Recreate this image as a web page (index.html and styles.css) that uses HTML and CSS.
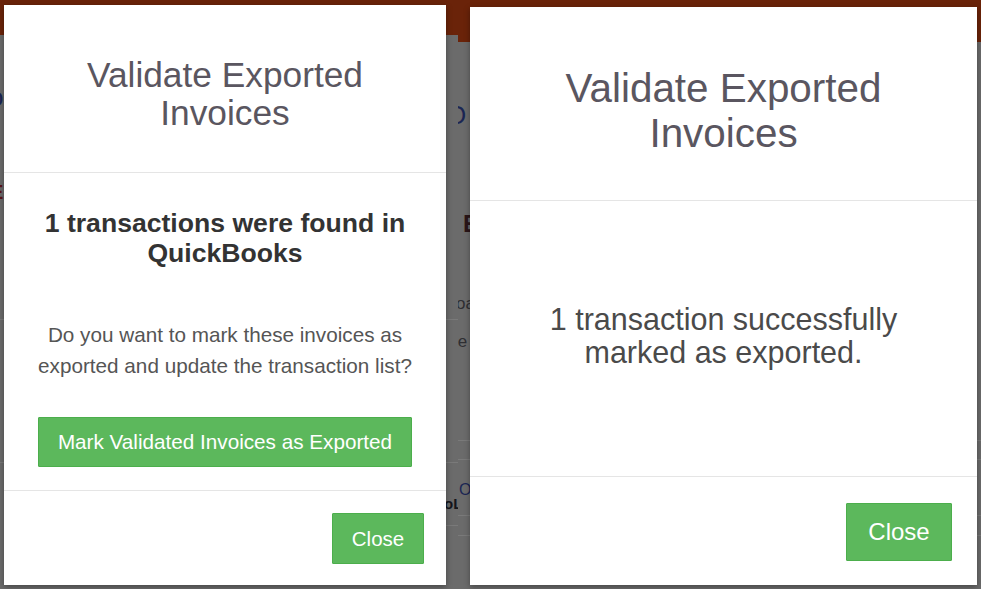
FILE: index.html
```html
<!DOCTYPE html>
<html lang="en">
<head>
    <meta charset="UTF-8">
    <title>Validate Exported Invoices</title>
    <link rel="stylesheet" href="styles.css">
</head>
<body>
<div class="shot shot-left">
    <div class="page page-left">
        <div class="bar"></div>
        <div class="frag edge-o">o</div>
        <div class="frag edge-e">E</div>
        <div class="rule rule-a"></div>
        <div class="rule rule-b"></div>
        <div class="frag gap-ol">oL</div>
        <div class="rule rule-c"></div>
    </div>
    <div class="modal modal-left">
        <div class="modal-header">
            <h4 class="modal-title">Validate Exported<br>Invoices</h4>
        </div>
        <div class="modal-body">
            <h4 class="found">1 transactions were found in<br>QuickBooks</h4>
            <p class="question">Do you want to mark these invoices as<br>exported and update the transaction list?</p>
            <button class="btn btn-success btn-mark">Mark Validated Invoices as Exported</button>
        </div>
        <div class="modal-footer">
            <button class="btn btn-success btn-close">Close</button>
        </div>
    </div>
</div>
<div class="shot shot-right">
    <div class="page page-right">
        <div class="bar"></div>
        <div class="frag gap-d">O</div>
        <div class="frag gap-e">E</div>
        <div class="frag gap-oa">oa</div>
        <div class="frag gap-re">re</div>
        <div class="rule rule-d"></div>
        <div class="rule rule-e"></div>
        <div class="frag gap-o">O</div>
        <div class="rule rule-f"></div>
        <div class="rule rule-g"></div>
        <div class="heads">
            <span>Date</span>
            <span>Sub Total</span>
            <span>Status</span>
        </div>
    </div>
    <div class="modal modal-right">
        <div class="modal-header">
            <h4 class="modal-title">Validate Exported<br>Invoices</h4>
        </div>
        <div class="modal-body">
            <p class="done">1 transaction successfully<br>marked as exported.</p>
        </div>
        <div class="modal-footer">
            <button class="btn btn-success btn-close">Close</button>
        </div>
    </div>
</div>
</body>
</html>
```

FILE: styles.css
```css
* {
    margin: 0;
    padding: 0;
    box-sizing: border-box;
}

body {
    width: 981px;
    height: 589px;
    overflow: hidden;
    display: flex;
    background-color: #6b6b6b;
    font-family: "Liberation Sans", Arial, sans-serif;
}

/* each screenshot: page behind, modal on top */
.shot {
    display: grid;
    height: 589px;
    overflow: hidden;
}

.shot-left {
    width: 458px;
}

.shot-right {
    flex: 1;
}

.page,
.modal {
    grid-area: 1 / 1;
}

.page {
    background-color: #6b6b6b;
    overflow: hidden;
}

.bar {
    height: 35px;
    background-color: #6a2309;
}

.page-right .bar {
    height: 42px;
}

.frag {
    white-space: nowrap;
}

.rule {
    height: 1px;
    background-color: #7a7a7a;
}

/* left page bits */
.edge-o {
    margin: 49px 0 0 -11px;
    font-size: 26px;
    line-height: 26px;
    color: #1b2654;
}

.edge-e {
    margin: 72px 0 0 -10px;
    font-size: 20px;
    line-height: 20px;
    font-weight: bold;
    color: #5a1418;
}

.rule-a {
    margin-top: 117px;
}

.rule-b {
    margin-top: 142px;
}

.gap-ol {
    margin: 34px 0 0 444px;
    font-size: 15px;
    line-height: 14px;
    font-weight: bold;
    color: #15151c;
}

.rule-c {
    margin: 14px 0 0 446px;
}

/* right page bits */
.gap-d {
    margin: 59px 0 0 -12px;
    font-size: 26px;
    line-height: 28px;
    color: #1b2654;
}

.gap-e {
    margin: 82px 0 0 5px;
    font-size: 24px;
    line-height: 26px;
    font-weight: bold;
    color: #2a1518;
}

.gap-oa {
    margin: 57px 0 0 -2px;
    font-size: 17px;
    line-height: 20px;
    color: #2f2f33;
}

.gap-re {
    margin: 18px 0 0 -6px;
    font-size: 17px;
    line-height: 20px;
    color: #2f2f33;
}

.rule-d {
    margin-top: 88px;
}

.rule-e {
    margin-top: 18px;
}

.gap-o {
    margin: 20px 0 0 1px;
    font-size: 16px;
    line-height: 20px;
    color: #1b2654;
}

.rule-f {
    margin-top: 15px;
}

.rule-g {
    margin-top: 19px;
}

.heads {
    display: flex;
    gap: 170px;
    margin: 62px 0 0 28px;
    font-size: 17px;
    line-height: 20px;
    font-weight: bold;
    color: #1a1a1a;
}

/* modal */
.modal {
    display: flex;
    flex-direction: column;
    background-color: #fff;
    box-shadow: 0 2px 6px rgba(0, 0, 0, .35);
    align-self: start;
}

.modal-left {
    width: 442px;
    height: 580px;
    margin: 5px 0 0 4px;
}

.modal-right {
    width: 507px;
    height: 578px;
    margin: 7px 0 0 12px;
}

.modal-header {
    text-align: center;
    border-bottom: 1px solid #e5e5e5;
}

.modal-title {
    font-weight: normal;
    color: #5a5660;
}

.modal-body {
    text-align: center;
}

.modal-footer {
    display: flex;
    justify-content: flex-end;
    border-top: 1px solid #e5e5e5;
}

.btn {
    font-family: "Liberation Sans", Arial, sans-serif;
    color: #fff;
    background-color: #5cb85c;
    border: 1px solid #4cae4c;
    border-radius: 1px;
}

/* left modal sizes */
.modal-left .modal-header {
    padding: 51px 20px 40px;
}

.modal-left .modal-title {
    font-size: 35.3px;
    line-height: 38px;
}

.modal-left .modal-body {
    padding: 35px 10px 23px;
}

.found {
    font-size: 26.6px;
    line-height: 30px;
    font-weight: bold;
    color: #333;
}

.question {
    margin-top: 51px;
    font-size: 20.7px;
    line-height: 31px;
    color: #555;
}

.btn-mark {
    display: block;
    width: 374px;
    height: 50px;
    margin: 36px auto 0;
    font-size: 20.7px;
}

.modal-left .modal-footer {
    padding: 22px 22px 21px;
}

.modal-left .btn-close {
    width: 92px;
    height: 51px;
    font-size: 20.5px;
}

/* right modal sizes */
.modal-right .modal-header {
    padding: 59px 20px 44px;
}

.modal-right .modal-title {
    font-size: 40.4px;
    line-height: 45px;
}

.modal-right .modal-body {
    padding: 102px 20px 107px;
}

.done {
    font-size: 30.5px;
    line-height: 33px;
    color: #4a4a4a;
}

.modal-right .modal-footer {
    padding: 26px 25px 24px;
}

.modal-right .btn-close {
    width: 106px;
    height: 58px;
    font-size: 24px;
}
```
